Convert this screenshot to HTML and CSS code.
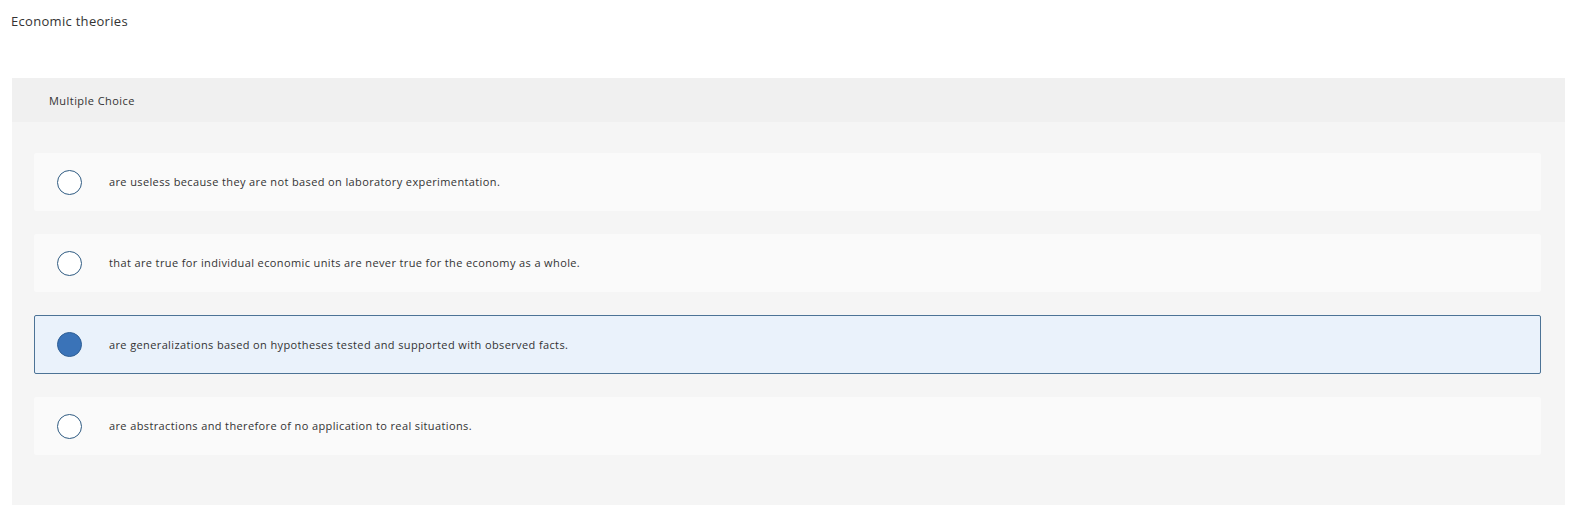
FILE: index.html
```html
<!DOCTYPE html>
<html>
<head>
<meta charset="utf-8">
<link rel="stylesheet" href="styles.css">
</head>
<body>
<div class="page">
  <div class="prompt">Economic theories</div>
  <div class="question">
    <div class="q-header">Multiple Choice</div>
    <div class="q-body">
      <div class="option"><span class="radio"></span><span class="label">are useless because they are not based on laboratory experimentation.</span></div>
      <div class="option"><span class="radio"></span><span class="label">that are true for individual economic units are never true for the economy as a whole.</span></div>
      <div class="option selected"><span class="radio"></span><span class="label">are generalizations based on hypotheses tested and supported with observed facts.</span></div>
      <div class="option"><span class="radio"></span><span class="label">are abstractions and therefore of no application to real situations.</span></div>
    </div>
  </div>
</div>
</body>
</html>
```
FILE: styles.css
```css
html, body {
  margin: 0;
  padding: 0;
  background: #ffffff;
}
body {
  font-family: "Open Sans", Lato, "Liberation Sans", Arial, sans-serif;
  color: #333333;
}
.page {
  padding: 13px 23px 0 12px;
}
.prompt {
  font-size: 13px;
  letter-spacing: 0.3px;
  line-height: 17px;
  margin-left: -1px;
  height: 65px;
}
.question {
  background: #f5f5f5;
}
.q-header {
  background: #f0f0f0;
  height: 44px;
  display: flex;
  align-items: center;
  padding-left: 37px;
  font-size: 11px;
  letter-spacing: 0.45px;
}
.q-body {
  padding: 31px 24px 50px 22px;
  display: flex;
  flex-direction: column;
  gap: 23px;
}
.option {
  background: #fafafa;
  height: 58px;
  display: flex;
  align-items: center;
  padding-left: 23px;
  box-sizing: border-box;
  border: 1px solid transparent;
  border-radius: 2px;
}
.option.selected {
  background: #eaf2fb;
  border-color: #4c7396;
  height: 59px;
}
.radio {
  width: 25px;
  height: 25px;
  box-sizing: border-box;
  border: 1.5px solid #2f5b82;
  border-radius: 50%;
  background: #ffffff;
  flex: none;
  margin-left: -1px;
}
.selected .radio {
  background: #3a73b8;
  border-color: #2f5f95;
}
.label {
  font-size: 11px;
  letter-spacing: 0.38px;
  margin-left: 27px;
  margin-top: -1px;
}
```
